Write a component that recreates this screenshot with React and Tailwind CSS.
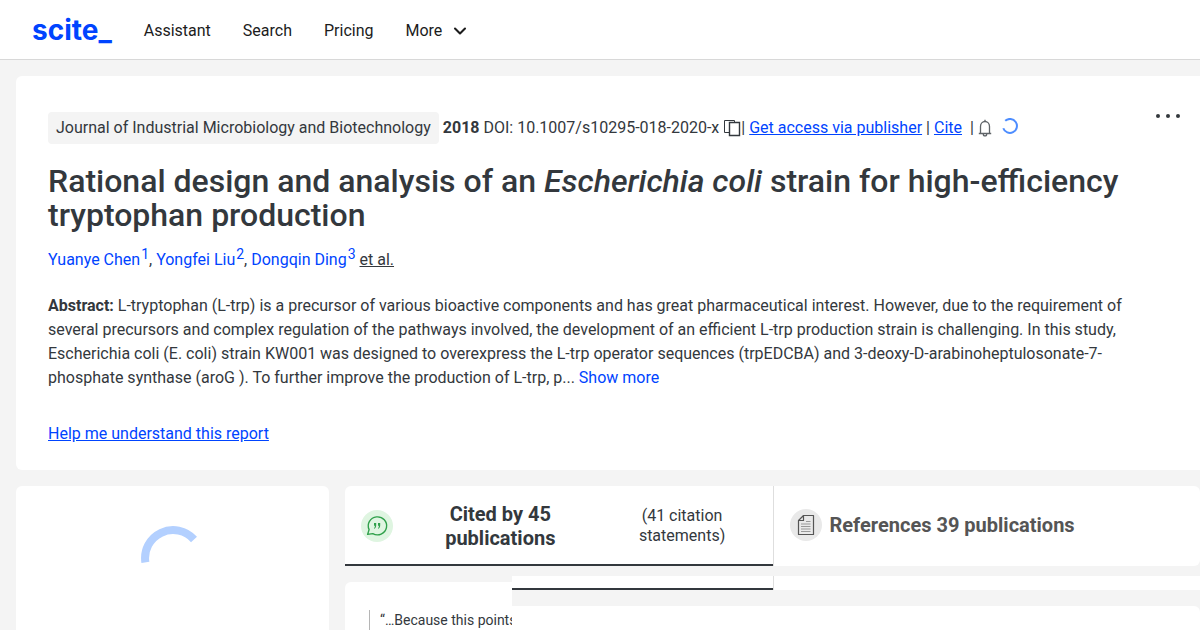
import React from "react";
import { ChevronDown } from "lucide-react";

const navLinks = ["Assistant", "Search", "Pricing"];

const authors = ["Yuanye Chen", "Yongfei Liu", "Dongqin Ding"];

const CopyIcon = () => (
  <svg width="18" height="18" viewBox="0 0 18 18" fill="none" stroke="currentColor">
    <path d="M6 13.5H1.5V1.5H11.5V3.5" />
    <path d="M6.5 3.5H16.5V16.5H6.5Z" strokeWidth="1.4" />
  </svg>
);

const BellIcon = () => (
  <svg width="14" height="18" viewBox="0 0 14 18" fill="none" stroke="currentColor" strokeWidth="1.3">
    <path d="M0.8 14.5H13.2M2.5 14.5V7.5C2.5 4.5 4.5 2.5 7 2.5C9.5 2.5 11.5 4.5 11.5 7.5V14.5" />
    <path d="M7 2.5V0.8M5.3 15C5.3 17.6 8.7 17.6 8.7 15" />
  </svg>
);

const QuoteIcon = () => (
  <svg width="32" height="32" viewBox="0 0 32 32" fill="none" className="shrink-0">
    <circle cx="16" cy="16" r="16" fill="#dff5e1" />
    <path
      d="M6.6 24.4L8.1 19.6A9.2 9 0 1 1 11.8 23.6Z"
      stroke="#2fa04a"
      strokeWidth="1.4"
      strokeLinejoin="round"
    />
    <path
      d="M13 13H15.2V15.2C15.2 17 14.5 18 13.2 18.8L12.9 18.2C13.6 17.6 13.9 16.9 13.9 15.8H13ZM17 13H19.2V15.2C19.2 17 18.5 18 17.2 18.8L16.9 18.2C17.6 17.6 17.9 16.9 17.9 15.8H17Z"
      fill="#2fa04a"
    />
  </svg>
);

const DocumentIcon = () => (
  <svg width="32" height="32" viewBox="0 0 32 32" fill="none" className="shrink-0">
    <circle cx="16" cy="16" r="16" fill="#e9e9e9" />
    <path
      d="M13.5 6.5H23.5V25.5H8.5V11.5ZM13.5 6.5V11.5H8.5"
      stroke="#555"
      strokeWidth="1.2"
      strokeLinejoin="round"
    />
    <path d="M16 12.5H20.5M11 15H20.5M11 17.5H20.5M11 20H20.5M11 22.5H20.5" stroke="#999" strokeWidth="1.2" />
  </svg>
);

const Header = () => (
  <header className="flex h-[60px] items-center gap-8 border-b border-[#d8d8d8] bg-white px-8 text-[#1c1c1c]">
    <a href="#" className="font-['Inter',sans-serif] text-[28px] leading-8 font-bold text-[#0044ff]">
      scite_
    </a>
    <nav className="flex items-center gap-8 pt-0.5">
      {navLinks.map((link) => (
        <a key={link} href="#">{link}</a>
      ))}
      <button type="button" className="flex items-center gap-2">
        More
        <ChevronDown size={20} strokeWidth={2.5} />
      </button>
    </nav>
  </header>
);

const PaperSummary = () => (
  <section className="rounded-l-md bg-white px-8 pt-9 pb-6">
    <div className="flex items-start justify-between">
      <div className="flex items-center gap-1">
        <span className="rounded bg-[#f4f4f4] px-2 py-1">
          Journal of Industrial Microbiology and Biotechnology
        </span>
        <span>
          <b>2018</b> DOI: 10.1007/s10295-018-2020-x
        </span>
        <div className="flex items-center">
          <button type="button" aria-label="Copy DOI">
            <CopyIcon />
          </button>
          <span>|</span>
        </div>
        <a href="#" className="text-[#0044ff] underline">Get access via publisher</a>
        <span>|</span>
        <a href="#" className="text-[#0044ff] underline">Cite</a>
        <span className="ml-1">|</span>
        <button type="button" aria-label="Set up alert" className="text-[#5f6468]">
          <BellIcon />
        </button>
        <svg width="16" height="16" viewBox="0 0 16 16" fill="none" className="mb-1 ml-1.5">
          <path d="M3.2 2.8A7 7 0 1 1 1.3 10.2" stroke="#4d8dff" strokeWidth="2" />
        </svg>
      </div>
      <button type="button" aria-label="More actions" className="-mr-3">
        <svg width="24" height="8" viewBox="0 0 24 8" fill="currentColor">
          <circle cx="2" cy="4" r="2" />
          <circle cx="12" cy="4" r="2" />
          <circle cx="22" cy="4" r="2" />
        </svg>
      </button>
    </div>

    <div className="pr-4">
      <h1 className="mt-5 text-[32px] leading-[34px] font-medium">
        Rational design and analysis of an <i>Escherichia coli</i> strain for high-efficiency
        tryptophan production
      </h1>
      <p className="mt-4">
        {authors.map((name, i) => (
          <React.Fragment key={name}>
            <a href="#" className="text-[#0044ff]">
              {name}
              <sup className="-top-1.5 ml-px text-sm leading-none">{i + 1}</sup>
            </a>
            {i < authors.length - 1 ? ", " : " "}
          </React.Fragment>
        ))}
        <button type="button" className="underline">et al.</button>
      </p>
      <p className="mt-[22px]">
        <b>Abstract:</b> L-tryptophan (L-trp) is a precursor of various bioactive components and has
        great pharmaceutical interest. However, due to the requirement of several precursors and
        complex regulation of the pathways involved, the development of an efficient L-trp production
        strain is challenging. In this study, Escherichia coli (E. coli) strain KW001 was designed to
        overexpress the L-trp operator sequences (trpEDCBA) and
        3-deoxy-D-arabinoheptulosonate-7-phosphate synthase (aroG ). To further improve the
        production of L-trp, p...{" "}
        <button type="button" className="text-[#0044ff]">Show more</button>
      </p>
      <a href="#" className="mt-8 inline-block text-[#0044ff] underline">
        Help me understand this report
      </a>
    </div>
  </section>
);

const Tabs = () => (
  <div className="grid h-20 grid-cols-2 overflow-hidden rounded-t-md rounded-br-md bg-white">
    <button type="button" className="flex items-center gap-2 border-b-2 border-[#33383d] px-4 pt-0.5">
      <QuoteIcon />
      <span className="flex-[4] text-xl leading-6 font-bold">Cited by 45 publications</span>
      <span className="flex-[3] leading-5">(41 citation statements)</span>
    </button>
    <button type="button" className="flex items-center gap-2 border-l border-[#dedede] px-4 pb-0.5 text-[#555]">
      <DocumentIcon />
      <span className="text-xl leading-6 font-bold">References 39 publications</span>
    </button>
  </div>
);

const Citations = () => (
  <div className="flex grow">
    <div className="flex w-[167px] flex-col pt-4">
      <div className="grow rounded-tl-md bg-white pt-7 pl-6">
        <blockquote className="overflow-hidden border-l border-[#b5b5b5] pl-2.5 text-sm leading-5 whitespace-nowrap">
          “…Because this points
        </blockquote>
      </div>
    </div>
    <div className="flex grow flex-col gap-4 pt-2.5">
      <div className="flex h-3.5 bg-white">
        <div className="w-[261px] border-b-2 border-[#33383d]" />
        <div className="grow border-l border-[#dedede]" />
      </div>
      <div className="grow rounded-tr-md bg-white" />
    </div>
  </div>
);

const App = () => {
  return (
    <div className="flex min-h-screen flex-col bg-[#f4f4f4] font-['Roboto',sans-serif] text-base text-[#33383d]">
      <Header />
      <main className="flex grow flex-col gap-4 pt-4 pl-4">
        <PaperSummary />
        <div className="flex grow gap-4">
          <aside className="flex w-[313px] shrink-0 justify-center rounded-t-md bg-white pt-10">
            <svg width="64" height="64" viewBox="0 0 64 64" fill="none">
              <path d="M4.4 36.4A28 28 0 0 1 53 13.5" stroke="#b3d0ff" strokeWidth="8" />
            </svg>
          </aside>
          <section className="flex min-w-0 grow flex-col">
            <Tabs />
            <Citations />
          </section>
        </div>
      </main>
    </div>
  );
};

export default App;
